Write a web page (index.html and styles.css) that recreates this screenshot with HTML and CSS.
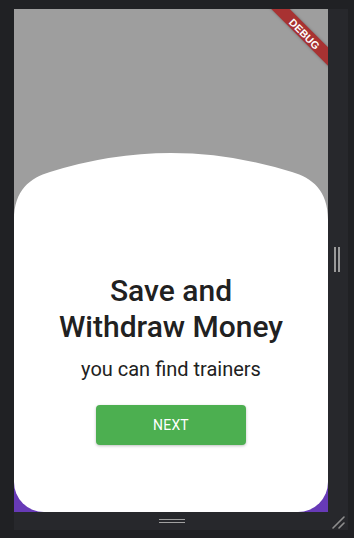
FILE: index.html
```html
<!DOCTYPE html>
<html>
<head>
<meta charset="utf-8">
<link rel="stylesheet" href="styles.css">
</head>
<body>
<div class="frame">
  <div class="screen">
    <div class="spacer"></div>
    <div class="card">
      <svg class="card-top" viewBox="0 0 314 70" preserveAspectRatio="none" width="314" height="70">
        <path d="M0,71 L0,70 C0,40 16,28 36,22 Q157,-16 278,22 C298,28 314,40 314,70 L314,71 Z" fill="#ffffff"/>
      </svg>
      <div class="card-body">
        <h1 class="title">Save and<br>Withdraw Money</h1>
        <p class="subtitle">you can find trainers</p>
        <div class="btn">NEXT</div>
      </div>
    </div>
    <div class="debug"><span>DEBUG</span></div>
  </div>
  <div class="side">
    <div class="vgrip"></div>
  </div>
  <div class="bottom">
    <div class="hgrip"></div>
    <svg class="resize" width="16" height="16" viewBox="0 0 16 16">
      <path d="M3,14 L14,3 M9,14 L14,9" stroke="#8e8e8e" stroke-width="1.6" stroke-linecap="round"/>
    </svg>
  </div>
</div>
</body>
</html>
```

FILE: styles.css
```css
html, body {
  margin: 0;
  padding: 0;
  background: #202124;
  width: 354px;
  height: 538px;
  overflow: hidden;
}

.frame {
  margin: 9px 0 0 14px;
  display: grid;
  grid-template-columns: 314px 20px;
  grid-template-rows: 503px 18px;
  background: #27282c;
  width: 334px;
}

.screen {
  position: relative;
  overflow: hidden;
  display: flex;
  flex-direction: column;
  background: linear-gradient(#9e9e9e calc(100% - 50px), #673ab7 0);
  font-family: Roboto, "Liberation Sans", sans-serif;
}

.spacer {
  height: 141px;
  flex: none;
}

.card {
  flex: 1;
  display: flex;
  flex-direction: column;
}

.card-top {
  display: block;
  flex: none;
}

.card-body {
  flex: 1;
  background: #ffffff;
  border-radius: 0 0 30px 30px;
  display: flex;
  flex-direction: column;
  align-items: center;
  padding-top: 53px;
}

.title {
  margin: 0;
  font-size: 30px;
  line-height: 36px;
  font-weight: 500;
  color: #212121;
  text-align: center;
}

.subtitle {
  margin: 11px 0 0;
  font-size: 20px;
  line-height: 26px;
  font-weight: 400;
  color: #212121;
}

.btn {
  margin-top: 23px;
  width: 150px;
  height: 40px;
  background: #4caf50;
  border-radius: 4px;
  color: #ffffff;
  font-size: 14px;
  font-weight: 400;
  letter-spacing: 0.2px;
  display: flex;
  align-items: center;
  justify-content: center;
  box-shadow: 0 1px 3px rgba(0,0,0,0.25);
}

.debug {
  position: absolute;
  left: 229px;
  top: 18px;
  width: 124px;
  height: 13px;
  background: #a83232;
  transform: rotate(45deg);
  display: flex;
  align-items: center;
  justify-content: center;
  box-shadow: 0 0 3px rgba(0,0,0,0.3);
}

.debug span {
  color: #ffffff;
  font-family: "Liberation Sans", Arial, sans-serif;
  font-weight: 700;
  font-size: 10.5px;
  letter-spacing: 0.1px;
}

.side {
  display: flex;
  align-items: center;
  justify-content: center;
}

.vgrip {
  width: 2px;
  height: 25px;
  border-left: 2px solid #9a9a9a;
  border-right: 2px solid #9a9a9a;
  margin-left: -2px;
  margin-top: -2px;
}

.bottom {
  grid-column: 1 / 3;
  display: flex;
  align-items: center;
  justify-content: center;
  position: relative;
}

.hgrip {
  width: 26px;
  height: 2px;
  border-top: 1.5px solid #a0a0a0;
  border-bottom: 1.5px solid #a0a0a0;
  margin-left: -18px;
}

.resize {
  position: absolute;
  right: 2px;
  top: 2px;
}
```
